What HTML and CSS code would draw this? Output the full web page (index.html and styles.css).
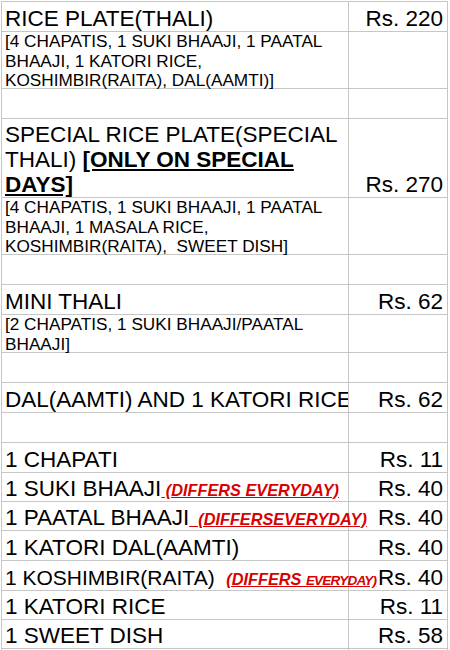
FILE: index.html
```html
<!DOCTYPE html>
<html lang="en">
<head>
<meta charset="utf-8">
<title>Menu</title>
<link rel="stylesheet" href="styles.css">
</head>
<body>
<div class="sheet">
  <div class="c"><div class="t">RICE PLATE(THALI)</div></div><div class="c price"><div class="t">Rs. 220</div></div>
  <div class="c desc"><div class="t">[4 CHAPATIS, 1 SUKI BHAAJI, 1 PAATAL BHAAJI, 1 KATORI RICE, KOSHIMBIR(RAITA), DAL(AAMTI)]</div></div><div class="c"></div>
  <div class="c"></div><div class="c"></div>
  <div class="c wrap"><div class="t">SPECIAL RICE PLATE(SPECIAL THALI) <span class="hl">[ONLY ON SPECIAL DAYS]</span></div></div><div class="c price"><div class="t">Rs. 270</div></div>
  <div class="c desc"><div class="t">[4 CHAPATIS, 1 SUKI BHAAJI, 1 PAATAL BHAAJI, 1 MASALA RICE, KOSHIMBIR(RAITA), &nbsp;SWEET DISH]</div></div><div class="c"></div>
  <div class="c"></div><div class="c"></div>
  <div class="c"><div class="t">MINI THALI</div></div><div class="c price"><div class="t">Rs. 62</div></div>
  <div class="c desc"><div class="t">[2 CHAPATIS, 1 SUKI BHAAJI/PAATAL BHAAJI]</div></div><div class="c"></div>
  <div class="c"></div><div class="c"></div>
  <div class="c clip"><div class="t">DAL(AAMTI) AND 1 KATORI RICE</div></div><div class="c price"><div class="t">Rs. 62</div></div>
  <div class="c"></div><div class="c"></div>
  <div class="c"><div class="t">1 CHAPATI</div></div><div class="c price"><div class="t">Rs. 11</div></div>
  <div class="c"><div class="t">1 SUKI BHAAJI<span class="note">&nbsp;(DIFFERS EVERYDAY)</span></div></div><div class="c price"><div class="t">Rs. 40</div></div>
  <div class="c"><div class="t">1 PAATAL BHAAJI<span class="note">&nbsp;&nbsp;(DIFFERSEVERYDAY)</span></div></div><div class="c price"><div class="t">Rs. 40</div></div>
  <div class="c"><div class="t">1 KATORI DAL(AAMTI)</div></div><div class="c price"><div class="t">Rs. 40</div></div>
  <div class="c"><div class="t"><span class="smaller">1 KOSHIMBIR(RAITA)&nbsp; </span><span class="note">(DIFFERS <span class="squeeze">EVERYDAY)</span></span></div></div><div class="c price"><div class="t">Rs. 40</div></div>
  <div class="c"><div class="t">1 KATORI RICE</div></div><div class="c price"><div class="t">Rs. 11</div></div>
  <div class="c"><div class="t">1 SWEET DISH</div></div><div class="c price"><div class="t">Rs. 58</div></div>
  <div class="c end"></div><div class="c end"></div>
</div>
</body>
</html>
```
FILE: styles.css
```css
* {
  box-sizing: border-box;
}

body {
  margin: 0;
  background: #ffffff;
  color: #000000;
  font-family: "Liberation Sans", Arial, sans-serif;
  overflow: hidden;
}

.sheet {
  display: grid;
  grid-template-columns: 347px 99px;
  grid-template-rows: 30px 57px 30px 79px 57px 30px 30px 38px 30px 30px 30px 30px 29px 29px 30px 30px 29px 29px 1px;
  width: 447px;
  margin: 1px 0 0 1px;
  border-top: 1px solid #c6c6c6;
  border-left: 1px solid #c6c6c6;
}

.c {
  display: flex;
  flex-direction: column;
  justify-content: flex-end;
  min-width: 0;
  padding: 0 4px 0 3px;
  border-right: 1px solid #c6c6c6;
  border-bottom: 1px solid #c6c6c6;
  font-size: 22.5px;
  line-height: 25px;
  white-space: nowrap;
}

.t {
  min-width: 0;
}

.wrap {
  white-space: normal;
}

.desc {
  justify-content: flex-start;
  font-size: 17.2px;
  line-height: 19.5px;
  white-space: normal;
}

.price {
  text-align: right;
}

.clip {
  overflow: hidden;
}

.end {
  border-bottom: none;
}

.hl {
  font-weight: bold;
  text-decoration: underline;
}

.note {
  color: #d80000;
  font-size: 16.3px;
  font-weight: bold;
  font-style: italic;
  line-height: 1;
  text-decoration: underline;
}

.smaller {
  font-size: 21px;
}

.squeeze {
  font-size: 13.5px;
  letter-spacing: -0.8px;
}
```
